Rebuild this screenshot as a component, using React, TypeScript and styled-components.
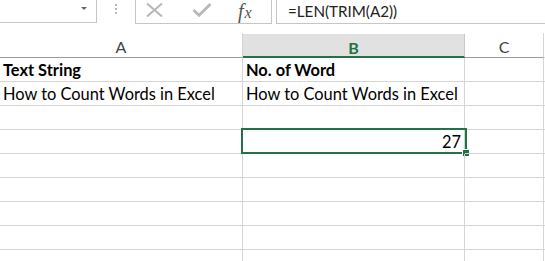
import React from 'react';
import styled, { createGlobalStyle } from 'styled-components';

const GlobalStyle = createGlobalStyle`
  html, body {
    margin: 0;
    padding: 0;
    background: #ffffff;
    overflow: hidden;
  }
  body {
    font-family: 'Lato', 'Liberation Sans', sans-serif;
  }
`;

const columns = ['A', 'B', 'C'];
const selectedCol = 'B';

type Row = { a?: string; b?: string; bold?: boolean; selected?: boolean; value?: string };

const rows: Row[] = [
  { a: 'Text String', b: 'No. of Word', bold: true },
  { a: 'How to Count Words in Excel', b: 'How to Count Words in Excel' },
  {},
  { selected: true, value: '27' },
  {},
  {},
  {},
  {},
  {},
];

const App = () => {
  return (
    <Page>
      <GlobalStyle />
      <FormulaBar>
        <NameBox>
          <DropArrow />
        </NameBox>
        <Grip>
          <i />
          <i />
          <i />
        </Grip>
        <FxGroup>
          <svg width="19" height="16" viewBox="0 0 19 16">
            <path d="M2 1.5 L17 14.5 M17 1.5 L2 14.5" stroke="#b8b8b8" strokeWidth="2" fill="none" />
          </svg>
          <svg width="20" height="14" viewBox="0 0 20 14">
            <path d="M1.5 7 L7 12.3 L18.5 1" stroke="#b8b8b8" strokeWidth="2.8" fill="none" />
          </svg>
          <FxLabel>
            f<sub>x</sub>
          </FxLabel>
        </FxGroup>
        <FormulaInput>=LEN(TRIM(A2))</FormulaInput>
      </FormulaBar>
      <Sheet>
        {columns.map((c) => (
          <HeaderCell key={c} active={c === selectedCol}>
            {c}
          </HeaderCell>
        ))}
        <Spare />
        {rows.map((r, i) => (
          <React.Fragment key={i}>
            <Cell bold={r.bold}>{r.a}</Cell>
            <Cell bold={r.bold} alignRight={!!r.value}>
              {r.b || r.value}
              {r.selected && (
                <Selection>
                  <FillHandle />
                </Selection>
              )}
            </Cell>
            <Cell />
            <Spare />
          </React.Fragment>
        ))}
      </Sheet>
    </Page>
  );
};

export default App;

const Page = styled.div`
  width: 545px;
  height: 261px;
  overflow: hidden;
  background: #ffffff;
`;

const FormulaBar = styled.div`
  display: flex;
  height: 33px;
  align-items: flex-start;
`;

const NameBox = styled.div`
  position: relative;
  width: 97px;
  height: 23px;
  border-right: 1px solid #c6c6c6;
  border-bottom: 1px solid #c6c6c6;
  box-sizing: border-box;
  flex: none;
`;

const DropArrow = styled.span`
  position: absolute;
  right: 9px;
  top: 7px;
  width: 0;
  height: 0;
  border-left: 3px solid transparent;
  border-right: 3px solid transparent;
  border-top: 3px solid #666666;
`;

const Grip = styled.div`
  width: 38px;
  height: 23px;
  display: flex;
  flex-direction: column;
  align-items: center;
  padding-top: 4px;
  gap: 2px;
  box-sizing: border-box;
  flex: none;
  i {
    width: 2px;
    height: 2px;
    background: #b5b5b5;
    display: block;
  }
`;

const FxGroup = styled.div`
  width: 137px;
  height: 24px;
  box-sizing: border-box;
  border-left: 1px solid #c6c6c6;
  border-right: 1px solid #c6c6c6;
  border-bottom: 1px solid #c6c6c6;
  display: flex;
  align-items: center;
  padding: 0 0 3px 9px;
  gap: 28px;
  flex: none;
  svg {
    display: block;
  }
`;

const FxLabel = styled.span`
  align-self: flex-start;
  font-family: 'Liberation Serif', 'DejaVu Serif', serif;
  font-style: italic;
  font-size: 20px;
  color: #555555;
  margin-left: -2px;
  line-height: 20px;
  padding-top: 1px;
  sub {
    font-size: 16px;
    vertical-align: baseline;
    margin-left: 1px;
  }
`;

const FormulaInput = styled.div`
  flex: 1;
  margin-left: 4px;
  height: 24px;
  box-sizing: border-box;
  border-left: 1px solid #c6c6c6;
  border-bottom: 1px solid #c6c6c6;
  padding-left: 11px;
  font-size: 15.2px;
  line-height: 22px;
  color: #222222;
`;

const Sheet = styled.div`
  display: grid;
  grid-template-columns: 243px 222px 79px 1px;
  grid-auto-rows: 24px;
  grid-template-rows: 25px;
`;

const HeaderCell = styled.div<{ active?: boolean }>`
  box-sizing: border-box;
  border-right: 1px solid ${({ active }) => (active ? '#c8c8c8' : '#d4d4d4')};
  border-bottom: ${({ active }) => (active ? '2px solid #217346' : '1px solid #9b9b9b')};
  background: ${({ active }) => (active ? '#e1e1e1' : '#ffffff')};
  color: ${({ active }) => (active ? '#217346' : '#444444')};
  font-weight: ${({ active }) => (active ? 700 : 400)};
  font-size: 16px;
  text-align: center;
  line-height: 25px;
  padding-top: 1px;
  margin-top: ${({ active }) => (active ? '1px' : '0')};
`;

const Spare = styled.div`
  border-bottom: 1px solid #d4d4d4;
  box-sizing: border-box;
`;

const Cell = styled.div<{ bold?: boolean; alignRight?: boolean }>`
  position: relative;
  box-sizing: border-box;
  border-right: 1px solid #d4d4d4;
  border-bottom: 1px solid #d4d4d4;
  font-size: 16.4px;
  line-height: 23px;
  font-weight: ${({ bold }) => (bold ? 700 : 400)};
  color: #000000;
  padding: 0 ${({ alignRight }) => (alignRight ? '3px' : '0')} 0 3px;
  text-align: ${({ alignRight }) => (alignRight ? 'right' : 'left')};
  white-space: nowrap;
`;

const Selection = styled.div`
  position: absolute;
  left: -2px;
  top: -2px;
  width: 226px;
  height: 26px;
  box-sizing: border-box;
  border: 2px solid #217346;
  pointer-events: none;
`;

const FillHandle = styled.span`
  position: absolute;
  right: -5px;
  bottom: -5px;
  width: 6px;
  height: 6px;
  background: #217346;
  border: 1px solid #ffffff;
`;
